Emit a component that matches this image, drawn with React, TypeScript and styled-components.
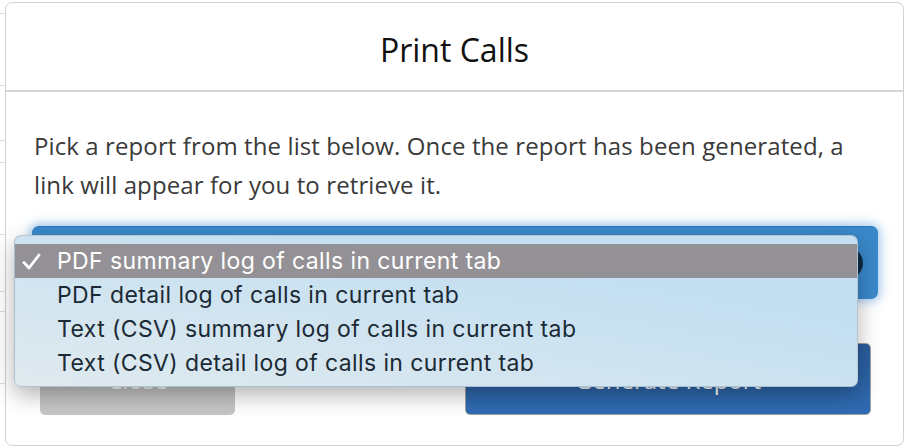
import * as React from 'react';
import styled, { createGlobalStyle } from 'styled-components';

const GlobalStyle = createGlobalStyle`
  html, body {
    margin: 0;
    padding: 0;
    background: #ffffff;
  }
  body {
    width: 908px;
    height: 448px;
    overflow: hidden;
    font-family: "Open Sans", "Liberation Sans", sans-serif;
  }
`;

const Page = styled.div`
  position: relative;
  display: flex;
  width: 908px;
  height: 448px;
  background: #ffffff;
`;

const BackStrip = styled.div`
  width: 5px;
  flex-shrink: 0;
  display: flex;
  flex-direction: column;
`;

const BackRow = styled.div<{ $h: number }>`
  height: ${(p) => p.$h}px;
  box-sizing: border-box;
  border-bottom: 1px solid #dcdcdc;
`;

const Modal = styled.div`
  flex: 1;
  margin: 2px 4px 2px 0;
  display: flex;
  flex-direction: column;
  background: #ffffff;
  border: 1px solid #d2d2d2;
  border-radius: 7px;
`;

const Header = styled.div`
  padding: 25px 0 18px;
  text-align: center;
  border-bottom: 2px solid #d6d6d6;
`;

const Title = styled.h2`
  margin: 0;
  font-family: "Open Sans", sans-serif;
  font-size: 32px;
  font-weight: 400;
  line-height: 44px;
  color: #111111;
`;

const Body = styled.div`
  display: flex;
  flex-direction: column;
  padding: 34px 25px 30px 26px;
`;

const Intro = styled.p`
  margin: 0 0 22px 2px;
  font-family: "Open Sans", sans-serif;
  font-size: 24px;
  line-height: 39px;
  letter-spacing: 0.1px;
  color: #3a3a3a;
`;

const Select = styled.div`
  height: 73px;
  box-sizing: border-box;
  display: flex;
  align-items: center;
  justify-content: flex-end;
  padding-right: 15px;
  background: #3a88ca;
  border-top: 1px solid #2e78bb;
  border-radius: 7px;
  box-shadow: 0 0 10px 3px rgba(90, 160, 225, 0.5);
`;

const SelectArrow = styled.span`
  width: 32px;
  height: 32px;
  border-radius: 50%;
  background: #0d2b47;
`;

const Footer = styled.div`
  display: flex;
  justify-content: space-between;
  margin-top: 44px;
  padding: 0 7px 0 8px;
`;

const Button = styled.button<{ $primary?: boolean }>`
  width: ${(p) => (p.$primary ? 406 : 195)}px;
  height: 72px;
  box-sizing: border-box;
  border: ${(p) => (p.$primary ? '1px solid #a2a2a2' : 'none')};
  border-radius: 5px;
  background: ${(p) =>
    p.$primary
      ? 'linear-gradient(to bottom, #2a5c9c, #2f6cb3)'
      : 'linear-gradient(to bottom, #bdbdbd, #c7c7c7)'};
  color: #ffffff;
  font-family: "Open Sans", sans-serif;
  font-size: 24px;
  cursor: pointer;
`;

const Menu = styled.ul`
  position: absolute;
  left: 14px;
  top: 235px;
  width: 844px;
  height: 152px;
  box-sizing: border-box;
  margin: 0;
  padding: 8px 0;
  list-style: none;
  background: linear-gradient(to top right, #e0eaef, #c3dff1 70%);
  border: 1px solid rgba(0, 0, 0, 0.14);
  border-radius: 7px;
  box-shadow: 0 8px 22px rgba(0, 0, 0, 0.3);
  overflow: hidden;
`;

const MenuItem = styled.li<{ $active?: boolean }>`
  display: flex;
  align-items: center;
  height: 34px;
  padding-left: 7px;
  background: ${(p) => (p.$active ? '#939196' : 'transparent')};
  color: ${(p) => (p.$active ? '#ffffff' : '#1b2a35')};
  font-family: Inter, "Liberation Sans", sans-serif;
  font-size: 23px;
  letter-spacing: 0.4px;
  white-space: nowrap;
`;

const CheckSlot = styled.span`
  width: 35px;
  display: flex;
  align-items: center;
`;

const options = [
  'PDF summary log of calls in current tab',
  'PDF detail log of calls in current tab',
  'Text (CSV) summary log of calls in current tab',
  'Text (CSV) detail log of calls in current tab',
];

const backRows = [14, 72, 55, 22, 72, 57, 20, 72];

export default function App() {
  const [selected, setSelected] = React.useState(0);

  return (
    <Page>
      <GlobalStyle />
      <BackStrip>
        {backRows.map((h, i) => (
          <BackRow key={i} $h={h} />
        ))}
      </BackStrip>
      <Modal>
        <Header>
          <Title>Print Calls</Title>
        </Header>
        <Body>
          <Intro>
            Pick a report from the list below. Once the report has been generated, a link will
            appear for you to retrieve it.
          </Intro>
          <Select>
            <SelectArrow />
          </Select>
          <Footer>
            <Button>Close</Button>
            <Button $primary>Generate Report</Button>
          </Footer>
        </Body>
      </Modal>
      <Menu>
        {options.map((o, i) => (
          <MenuItem key={o} $active={i === selected} onClick={() => setSelected(i)}>
            <CheckSlot>
              {i === selected && (
                <svg width="19" height="17" viewBox="0 0 19 17">
                  <path
                    d="M2 9.5 L7 15 L17 2"
                    fill="none"
                    stroke="#ffffff"
                    strokeWidth="2.8"
                    strokeLinecap="round"
                    strokeLinejoin="round"
                  />
                </svg>
              )}
            </CheckSlot>
            {o}
          </MenuItem>
        ))}
      </Menu>
    </Page>
  );
}
